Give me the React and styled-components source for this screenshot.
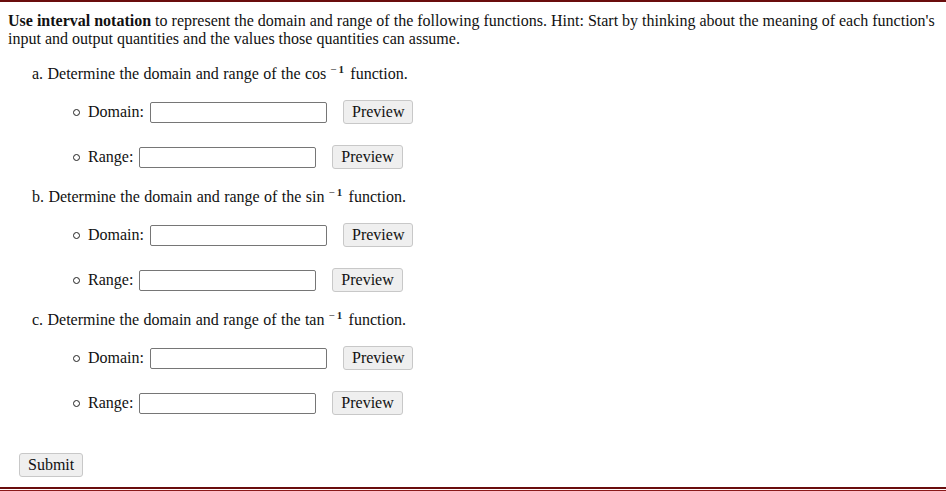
import React from 'react'
import styled, { createGlobalStyle } from 'styled-components'

const GlobalStyle = createGlobalStyle`
  html, body {
    margin: 0;
    padding: 0;
    background: #fff;
  }
  body {
    font-family: "Liberation Serif", "Times New Roman", serif;
    font-size: 16px;
    color: #111;
  }
`

const parts = [
  { letter: 'a', fn: 'cos' },
  { letter: 'b', fn: 'sin' },
  { letter: 'c', fn: 'tan' },
]

const App = () => {
  return (
    <>
      <GlobalStyle />
      <Page>
        <Intro>
          <b>Use interval notation</b> to represent the domain and range of the
          following functions. Hint: Start by thinking about the meaning of each
          function's input and output quantities and the values those quantities
          can assume.
        </Intro>
        {parts.map((p) => (
          <Part key={p.letter}>
            <Heading>
              {p.letter}. Determine the domain and range of the {p.fn}
              <Sup>
                −<b>1</b>
              </Sup>{' '}
              function.
            </Heading>
            <List>
              <Row>
                <Bullet />
                <Label>Domain:</Label>
                <Field type='text' />
                <Button>Preview</Button>
              </Row>
              <Row>
                <Bullet />
                <Label>Range:</Label>
                <Field type='text' />
                <Button>Preview</Button>
              </Row>
            </List>
          </Part>
        ))}
        <SubmitRow>
          <Button>Submit</Button>
        </SubmitRow>
        <BottomRule />
      </Page>
    </>
  )
}

const Page = styled.div`
  border-top: 2px solid #6a0d0d;
  padding: 0 8px;
  display: flex;
  flex-direction: column;
`

const Intro = styled.p`
  margin: 10px 0 0;
  line-height: 18px;
  b {
    font-weight: bold;
  }
`

const Part = styled.section`
  display: flex;
  flex-direction: column;
  margin-top: 17px;
  & + & {
    margin-top: 19px;
  }
`

const Heading = styled.div`
  margin-left: 24px;
  line-height: 18px;
  height: 18px;
  word-spacing: 0.4px;
`

const Sup = styled.span`
  display: inline-block;
  font-size: 11px;
  vertical-align: 6px;
  line-height: 0;
  margin: 0 0 0 4px;
  letter-spacing: 2px;
  color: #222;
`

const List = styled.div`
  display: flex;
  flex-direction: column;
  gap: 21px;
  margin-top: 17px;
  padding-left: 65px;
`

const Row = styled.div`
  display: flex;
  align-items: center;
  height: 24px;
`

const Bullet = styled.span`
  width: 5px;
  height: 5px;
  border: 1px solid #222;
  border-radius: 50%;
  margin-right: 8px;
`

const Label = styled.span`
  margin-right: 6px;
`

const Field = styled.input`
  box-sizing: border-box;
  width: 177px;
  height: 21px;
  border: 1px solid #767676;
  border-radius: 2px;
  padding: 0 3px;
  margin: 0 16px 0 0;
  font: inherit;
`

const Button = styled.button`
  box-sizing: border-box;
  height: 24px;
  padding: 0 8px;
  font-family: "Liberation Serif", "Times New Roman", serif;
  font-size: 16px;
  color: #111;
  background: #efefef;
  border: 1px solid #c8c8c8;
  border-radius: 3px;
`

const SubmitRow = styled.div`
  display: flex;
  margin-top: 38px;
  padding-left: 11px;
`

const BottomRule = styled.div`
  margin: 10px -8px 0;
  height: 1px;
  border-top: 2px solid #6a0d0d;
  border-bottom: 1px solid #8a1a1a;
`

export default App
